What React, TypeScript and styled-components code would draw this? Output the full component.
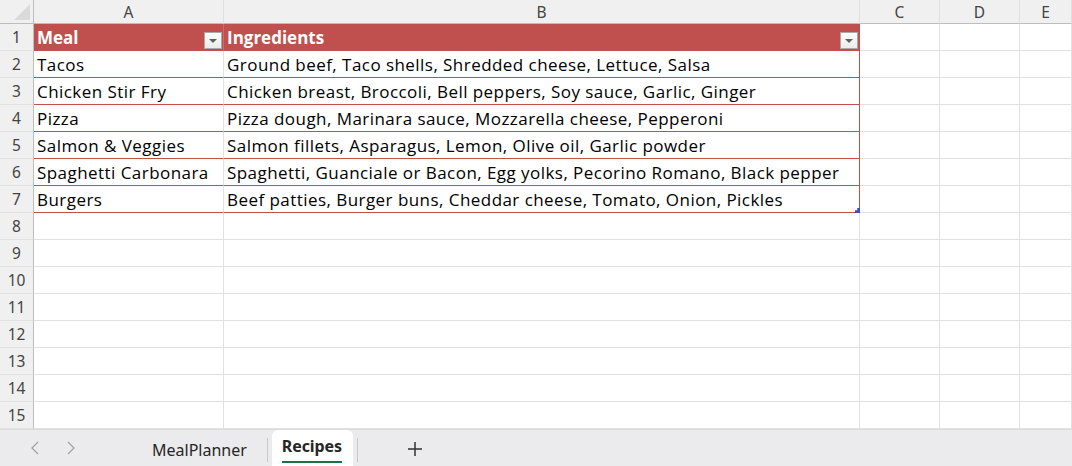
import React from "react";
import styled, { createGlobalStyle } from "styled-components";

const Global = createGlobalStyle`
  html, body { margin: 0; padding: 0; background: #ffffff; overflow: hidden; }
  body { width: 1072px; height: 466px; }
  * { box-sizing: border-box; }
`;

const RED = "#c0504d";
const GRID = "#e1e1e1";
const HEAD_LINE = "#bdbdbd";
const CELL_FONT = `"Open Sans", "Noto Sans", sans-serif`;
const UI_FONT = `"Noto Sans", "Open Sans", sans-serif`;

const Page = styled.div`
  display: flex;
  flex-direction: column;
  width: 1072px;
  height: 466px;
`;

const Sheet = styled.div`
  display: grid;
  grid-template-columns: 34px 190px 636px 80px 80px 1fr;
  grid-template-rows: 24px repeat(15, 27px);
  flex: none;
`;

const Corner = styled.div`
  position: relative;
  background: #f0f0f0;
  border-right: 1px solid ${HEAD_LINE};
  border-bottom: 1px solid ${HEAD_LINE};
  overflow: hidden;
`;

const CornerTri = styled.div`
  position: absolute;
  right: 3px;
  bottom: 3px;
  width: 0;
  height: 0;
  border-left: 16px solid transparent;
  border-bottom: 16px solid #dadada;
`;

const ColHead = styled.div`
  display: flex;
  align-items: center;
  justify-content: center;
  background: #f0f0f0;
  border-right: 1px solid ${GRID};
  border-bottom: 1px solid ${HEAD_LINE};
  font-family: ${UI_FONT};
  font-size: 15.5px;
  color: #444444;
  padding-top: 1px;
`;

const RowHead = styled.div`
  display: flex;
  align-items: center;
  justify-content: center;
  background: #f0f0f0;
  border-right: 1px solid ${HEAD_LINE};
  border-bottom: 1px solid ${GRID};
  font-family: ${UI_FONT};
  font-size: 15.5px;
  color: #444444;
`;

type CellKind = "head" | "body" | "plain";

const Cell = styled.div<{ $kind: CellKind; $edge?: boolean }>`
  position: relative;
  display: flex;
  align-items: center;
  justify-content: space-between;
  padding: 1px 1px 0 3px;
  font-family: ${CELL_FONT};
  font-size: 17px;
  letter-spacing: ${(p) => (p.$kind === "head" ? "0px" : "0.45px")};
  white-space: nowrap;
  overflow: visible;
  color: ${(p) => (p.$kind === "head" ? "#ffffff" : "#000000")};
  font-weight: ${(p) => (p.$kind === "head" ? 700 : 400)};
  background: ${(p) => (p.$kind === "head" ? RED : "#ffffff")};
  border-bottom: 1px solid ${(p) => (p.$kind === "plain" ? GRID : RED)};
  border-right: 1px solid
    ${(p) =>
      p.$edge && p.$kind === "body"
        ? RED
        : p.$kind === "head"
        ? p.$edge
          ? RED
          : "#c96e6b"
        : GRID};
`;

const FilterBtn = styled.div`
  align-self: flex-end;
  margin-bottom: 1px;
  width: 18px;
  height: 17px;
  flex: none;
  display: flex;
  align-items: center;
  justify-content: center;
  background: linear-gradient(#fbfbfb, #ececec);
  border: 1px solid #a9a9a9;
`;

const Arrow = styled.div`
  width: 0;
  height: 0;
  border-left: 4px solid transparent;
  border-right: 4px solid transparent;
  border-top: 4px solid #606060;
`;

const Handle = styled.div`
  position: absolute;
  right: -1px;
  bottom: -1px;
  width: 5px;
  height: 5px;
  background: #3f51b5;
  clip-path: polygon(100% 0, 100% 100%, 0 100%, 0 45%, 45% 45%, 45% 0);
`;

const TabBar = styled.div`
  flex: 1;
  display: flex;
  align-items: stretch;
  background: #ebebee;
  border-top: 1px solid #dcdcdc;
  font-family: ${UI_FONT};
`;

const NavGroup = styled.div`
  display: flex;
  align-items: center;
  gap: 28px;
  padding-left: 31px;
  width: 136px;
`;

const Tab = styled.div<{ $active?: boolean }>`
  display: flex;
  align-items: center;
  justify-content: center;
  padding: ${(p) => (p.$active ? "0 11px 0 10px" : "4px 16px 0")};
  font-size: 16px;
  color: #262626;
  font-weight: ${(p) => (p.$active ? 700 : 400)};
  background: ${(p) => (p.$active ? "#ffffff" : "transparent")};
  border-radius: ${(p) => (p.$active ? "6px 6px 0 0" : "0")};
`;

const TabLabel = styled.span`
  padding-bottom: 4px;
  border-bottom: 2px solid #1e7145;
  margin-top: 1px;
  letter-spacing: -0.1px;
`;

const Sep = styled.div`
  width: 1px;
  background: #c8c8c8;
  margin: 8px 4px 4px;
`;

const Plus = styled.div`
  display: flex;
  align-items: center;
  margin-left: 45px;
  padding-top: 2px;
`;

const cols = ["A", "B", "C", "D", "E"];

const data: [string, string][] = [
  ["Tacos", "Ground beef, Taco shells, Shredded cheese, Lettuce, Salsa"],
  ["Chicken Stir Fry", "Chicken breast, Broccoli, Bell peppers, Soy sauce, Garlic, Ginger"],
  ["Pizza", "Pizza dough, Marinara sauce, Mozzarella cheese, Pepperoni"],
  ["Salmon & Veggies", "Salmon fillets, Asparagus, Lemon, Olive oil, Garlic powder"],
  ["Spaghetti Carbonara", "Spaghetti, Guanciale or Bacon, Egg yolks, Pecorino Romano, Black pepper"],
  ["Burgers", "Beef patties, Burger buns, Cheddar cheese, Tomato, Onion, Pickles"],
];

const Chevron = ({ dir }: { dir: "left" | "right" }) => (
  <svg width="8" height="14" viewBox="0 0 8 14">
    <path
      d={dir === "left" ? "M7 1 L1 7 L7 13" : "M1 1 L7 7 L1 13"}
      fill="none"
      stroke="#a0a0a0"
      strokeWidth="1.2"
    />
  </svg>
);

const PlusIcon = () => (
  <svg width="16" height="16" viewBox="0 0 16 16">
    <path d="M8 1 V15 M1 8 H15" stroke="#333" strokeWidth="1.5" />
  </svg>
);

export default function App() {
  const rows: React.ReactNode[] = [];
  for (let r = 1; r <= 15; r++) {
    rows.push(<RowHead key={`rh${r}`}>{r}</RowHead>);
    if (r === 1) {
      rows.push(
        <Cell key="h1" $kind="head">
          <span>Meal</span>
          <FilterBtn>
            <Arrow />
          </FilterBtn>
        </Cell>
      );
      rows.push(
        <Cell key="h2" $kind="head" $edge>
          <span>Ingredients</span>
          <FilterBtn>
            <Arrow />
          </FilterBtn>
        </Cell>
      );
    } else if (r <= 7) {
      const [meal, ing] = data[r - 2];
      rows.push(
        <Cell key={`a${r}`} $kind="body">
          {meal}
        </Cell>
      );
      rows.push(
        <Cell key={`b${r}`} $kind="body" $edge>
          {ing}
          {r === 7 && <Handle />}
        </Cell>
      );
    } else {
      rows.push(<Cell key={`a${r}`} $kind="plain" />);
      rows.push(<Cell key={`b${r}`} $kind="plain" />);
    }
    rows.push(<Cell key={`c${r}`} $kind="plain" />);
    rows.push(<Cell key={`d${r}`} $kind="plain" />);
    rows.push(<Cell key={`e${r}`} $kind="plain" />);
  }

  return (
    <Page>
      <Global />
      <Sheet>
        <Corner>
          <CornerTri />
        </Corner>
        {cols.map((c) => (
          <ColHead key={c}>{c}</ColHead>
        ))}
        {rows}
      </Sheet>
      <TabBar>
        <NavGroup>
          <Chevron dir="left" />
          <Chevron dir="right" />
        </NavGroup>
        <Tab>MealPlanner</Tab>
        <Sep />
        <Tab $active>
          <TabLabel>Recipes</TabLabel>
        </Tab>
        <Sep />
        <Plus>
          <PlusIcon />
        </Plus>
      </TabBar>
    </Page>
  );
}
